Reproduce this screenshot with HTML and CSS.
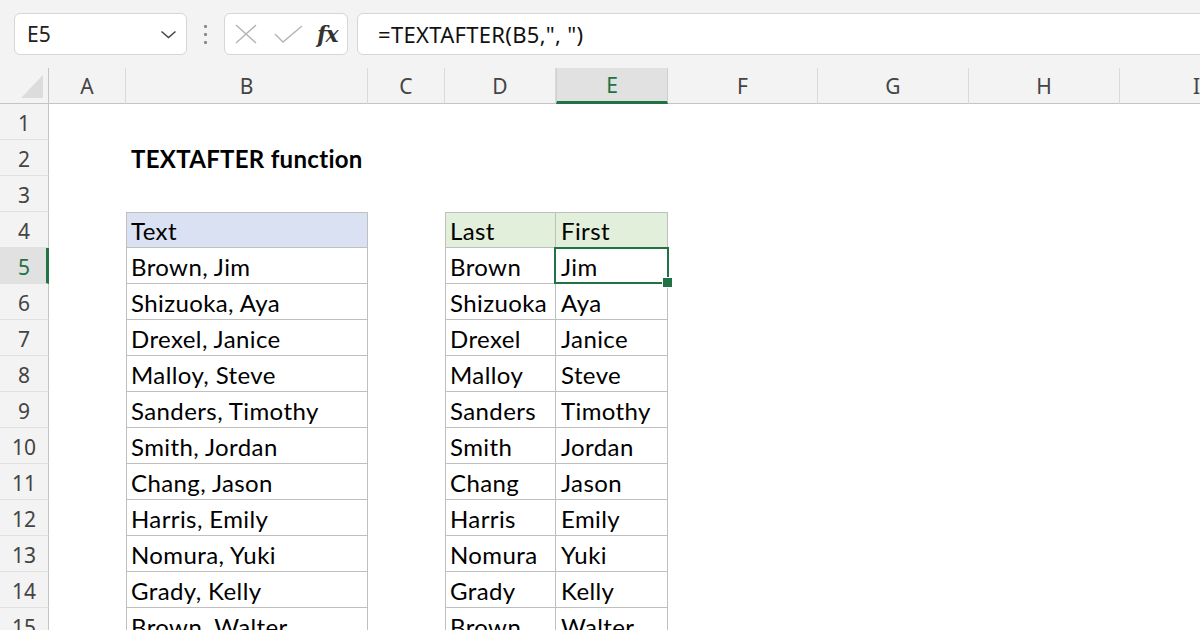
FILE: index.html
```html
<!DOCTYPE html>
<html lang="en">
<head>
<meta charset="utf-8">
<title>TEXTAFTER function</title>
<link rel="stylesheet" href="styles.css">
</head>
<body>
<div class="app">
  <div class="toolbar">
    <div class="namebox">
      <span>E5</span>
      <svg class="chev" width="17" height="9" viewBox="0 0 17 9"><path d="M1.5 1.5 L8.5 7.5 L15.5 1.5" fill="none" stroke="#444" stroke-width="1.5"/></svg>
    </div>
    <div class="vdots"><i></i><i></i><i></i></div>
    <div class="fxbox">
      <svg class="ico-x" width="22" height="20" viewBox="0 0 22 20"><path d="M1 1 L21 19 M21 1 L1 19" fill="none" stroke="#b4b4b4" stroke-width="1.4"/></svg>
      <svg class="ico-check" width="29" height="18" viewBox="0 0 29 18"><path d="M1 9 L9 17 L28 1" fill="none" stroke="#b4b4b4" stroke-width="1.4"/></svg>
      <span class="fx">fx</span>
    </div>
    <div class="formula">=TEXTAFTER(B5,", ")</div>
  </div>

  <div class="sheet">
    <div class="corner"><svg class="tri" width="22" height="23" viewBox="0 0 22 23"><path d="M22 0 L22 23 L0 23 Z" fill="#dcdcdc"/></svg></div>
    <div class="ch">A</div><div class="ch">B</div><div class="ch">C</div><div class="ch">D</div><div class="ch ch-sel">E</div><div class="ch">F</div><div class="ch">G</div><div class="ch">H</div><div class="ch">I</div>

    <div class="rh">1</div><div class="c"></div><div class="c"></div><div class="c"></div><div class="c"></div><div class="c"></div><div class="c"></div><div class="c"></div><div class="c"></div><div class="c"></div>

    <div class="rh">2</div><div class="c"></div><div class="c title">TEXTAFTER function</div><div class="c"></div><div class="c"></div><div class="c"></div><div class="c"></div><div class="c"></div><div class="c"></div><div class="c"></div>

    <div class="rh">3</div><div class="c"></div><div class="c"></div><div class="c"></div><div class="c"></div><div class="c"></div><div class="c"></div><div class="c"></div><div class="c"></div><div class="c"></div>

    <div class="rh">4</div><div class="c"></div><div class="c t tl tt hb">Text</div><div class="c"></div><div class="c t tl tt hg">Last</div><div class="c t tt hg">First</div><div class="c"></div><div class="c"></div><div class="c"></div><div class="c"></div>

    <div class="rh rh-sel">5</div><div class="c"></div><div class="c t tl">Brown, Jim</div><div class="c"></div><div class="c t tl">Brown</div><div class="c t sel">Jim</div><div class="c"></div><div class="c"></div><div class="c"></div><div class="c"></div>

    <div class="rh">6</div><div class="c"></div><div class="c t tl">Shizuoka, Aya</div><div class="c"></div><div class="c t tl">Shizuoka</div><div class="c t">Aya</div><div class="c"></div><div class="c"></div><div class="c"></div><div class="c"></div>

    <div class="rh">7</div><div class="c"></div><div class="c t tl">Drexel, Janice</div><div class="c"></div><div class="c t tl">Drexel</div><div class="c t">Janice</div><div class="c"></div><div class="c"></div><div class="c"></div><div class="c"></div>

    <div class="rh">8</div><div class="c"></div><div class="c t tl">Malloy, Steve</div><div class="c"></div><div class="c t tl">Malloy</div><div class="c t">Steve</div><div class="c"></div><div class="c"></div><div class="c"></div><div class="c"></div>

    <div class="rh">9</div><div class="c"></div><div class="c t tl">Sanders, Timothy</div><div class="c"></div><div class="c t tl">Sanders</div><div class="c t">Timothy</div><div class="c"></div><div class="c"></div><div class="c"></div><div class="c"></div>

    <div class="rh">10</div><div class="c"></div><div class="c t tl">Smith, Jordan</div><div class="c"></div><div class="c t tl">Smith</div><div class="c t">Jordan</div><div class="c"></div><div class="c"></div><div class="c"></div><div class="c"></div>

    <div class="rh">11</div><div class="c"></div><div class="c t tl">Chang, Jason</div><div class="c"></div><div class="c t tl">Chang</div><div class="c t">Jason</div><div class="c"></div><div class="c"></div><div class="c"></div><div class="c"></div>

    <div class="rh">12</div><div class="c"></div><div class="c t tl">Harris, Emily</div><div class="c"></div><div class="c t tl">Harris</div><div class="c t">Emily</div><div class="c"></div><div class="c"></div><div class="c"></div><div class="c"></div>

    <div class="rh">13</div><div class="c"></div><div class="c t tl">Nomura, Yuki</div><div class="c"></div><div class="c t tl">Nomura</div><div class="c t">Yuki</div><div class="c"></div><div class="c"></div><div class="c"></div><div class="c"></div>

    <div class="rh">14</div><div class="c"></div><div class="c t tl">Grady, Kelly</div><div class="c"></div><div class="c t tl">Grady</div><div class="c t">Kelly</div><div class="c"></div><div class="c"></div><div class="c"></div><div class="c"></div>

    <div class="rh">15</div><div class="c"></div><div class="c t tl">Brown, Walter</div><div class="c"></div><div class="c t tl">Brown</div><div class="c t">Walter</div><div class="c"></div><div class="c"></div><div class="c"></div><div class="c"></div>
  </div>
</div>
</body>
</html>
```

FILE: styles.css
```css
* { box-sizing: border-box; margin: 0; padding: 0; }
html, body { width: 1200px; height: 630px; overflow: hidden; background: #fff; }
body { font-family: "Noto Sans", "Open Sans", sans-serif; }

.app { width: 1200px; height: 630px; overflow: hidden; display: flex; flex-direction: column; }

/* ---------- formula bar ---------- */
.toolbar {
  height: 68px; flex: none; background: #f3f3f3;
  display: flex; align-items: flex-start;
  padding: 13px 0 0 14px;
}
.namebox {
  width: 173px; height: 42px; flex: none;
  background: #fff; border: 1px solid #d6d6d6; border-radius: 6px;
  display: flex; align-items: center; justify-content: space-between;
  padding: 0 9px 0 12px;
  font-size: 21px; color: #222;
}
.chev { display: block; margin-top: 1px; }
.vdots {
  width: 4px; height: 42px; margin-left: 17px; flex: none;
  display: flex; flex-direction: column; justify-content: center; gap: 5px;
}
.vdots i { display: block; width: 3px; height: 3px; background: #8a8a8a; border-radius: 1px; }
.fxbox {
  width: 124px; height: 42px; margin-left: 16px; flex: none;
  background: #fff; border: 1px solid #d6d6d6; border-radius: 6px;
  display: flex; align-items: center; padding-left: 10px;
}
.ico-x { display: block; }
.ico-check { display: block; margin-left: 17px; }
.fx {
  margin-left: 14px;
  font-family: "DejaVu Serif", "Liberation Serif", serif;
  font-style: italic; font-weight: 700; font-size: 22px; color: #333;
  letter-spacing: -1px;
}
.formula {
  flex: 1; height: 42px; margin-left: 9px; margin-right: -20px;
  background: #fff; border: 1px solid #d6d6d6; border-radius: 6px;
  padding-left: 20px; line-height: 40px;
  font-size: 22px; letter-spacing: 0.3px; color: #111; white-space: nowrap;
}

/* ---------- sheet ---------- */
.sheet {
  display: grid;
  grid-template-columns: 49px 77px 242px 77px 111px 112px 150px 151px 151px 154px;
  grid-auto-rows: 36px;
  font-family: Lato, "Noto Sans", sans-serif;
}
.corner {
  position: relative; background: #f3f3f3;
  border-right: 1px solid #c4c4c4; border-bottom: 1px solid #c4c4c4;
}
.tri { position: absolute; right: 5px; bottom: 5px; }
.ch {
  background: #f3f3f3;
  border-right: 1px solid #dadada; border-bottom: 1px solid #c4c4c4;
  font-family: "Noto Sans", sans-serif; font-size: 21px; color: #444;
  text-align: center; line-height: 36px;
}
.ch-sel {
  background: #e1e1e1; color: #217346;
  border-left: 1px solid #cfcfcf; border-right: 1px solid #cfcfcf;
  border-bottom: 3px solid #217346; line-height: 35px;
}
.rh {
  background: #f3f3f3;
  border-right: 1px solid #c4c4c4; border-bottom: 1px solid #e0e0e0;
  font-family: "Noto Sans", sans-serif; font-size: 21px; color: #444;
  text-align: center; line-height: 36px; padding-top: 1px;
}
.rh-sel { background: #e1e1e1; color: #217346; border-right: 3px solid #217346; padding-left: 2px; }

.c {
  padding: 2px 0 0 5px; line-height: 33px;
  font-size: 24px; letter-spacing: 0.4px; color: #000; white-space: nowrap;
}
.title { font-weight: 700; letter-spacing: 0.3px; }
.t { border-right: 1px solid #bfbfbf; border-bottom: 1px solid #bfbfbf; }
.tl { border-left: 1px solid #bfbfbf; padding-left: 4px; }
.tt { border-top: 1px solid #bfbfbf; padding-top: 1px; }
.hb { background: #d9e1f2; }
.hg { background: #e2efda; }

.sel { position: relative; }
.sel::before {
  content: ""; position: absolute;
  left: -2px; top: -1px; right: -2px; bottom: -1px;
  border: 2px solid #217346;
}
.sel::after {
  content: ""; position: absolute;
  right: -6px; bottom: -5px; width: 9px; height: 9px;
  background: #217346; border: 1px solid #fff;
}
```
